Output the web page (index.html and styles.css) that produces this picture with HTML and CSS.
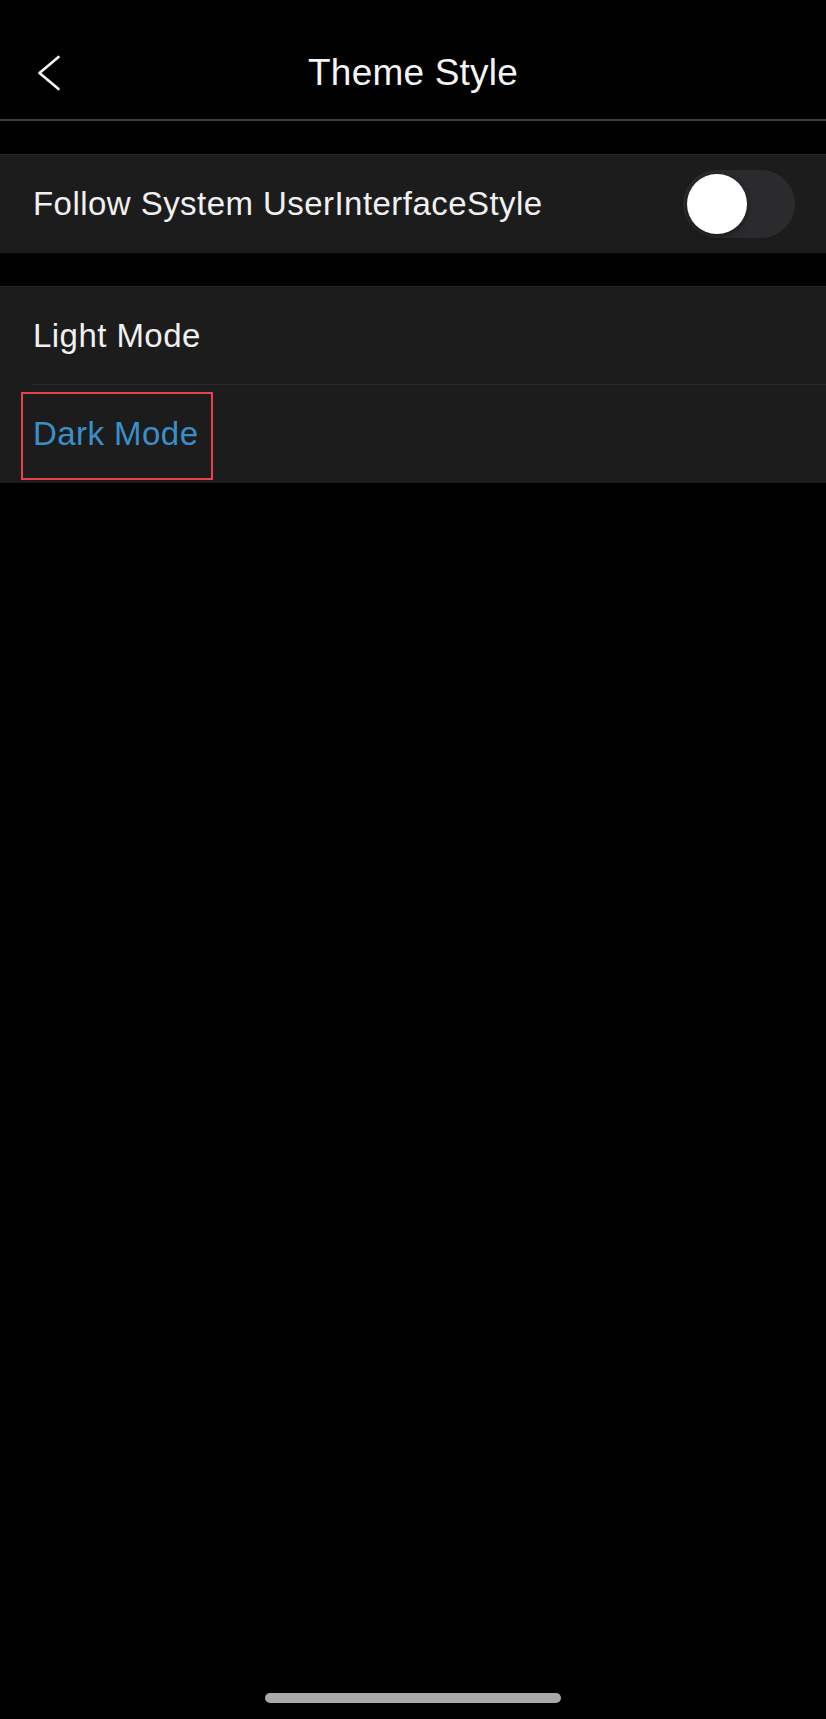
FILE: index.html
```html
<!DOCTYPE html>
<html lang="en">
<head>
<meta charset="utf-8">
<title>Theme Style</title>
<link rel="stylesheet" href="styles.css">
</head>
<body>
<div class="screen">
  <header class="navbar">
    <div class="nav-left">
      <svg class="back-icon" width="30" height="42" viewBox="0 0 30 42" aria-hidden="true">
        <polyline points="24.5,5 5.5,21 24.5,37" fill="none" stroke="#f2f2f2" stroke-width="2.7" stroke-linecap="round" stroke-linejoin="round"/>
      </svg>
    </div>
    <h1 class="nav-title">Theme Style</h1>
    <div class="nav-right"></div>
  </header>

  <section class="group group-first">
    <div class="row">
      <span class="row-label">Follow System UserInterfaceStyle</span>
      <span class="switch"><span class="switch-knob"></span></span>
    </div>
  </section>

  <section class="group">
    <div class="row row-sep">
      <span class="row-label">Light Mode</span>
    </div>
    <div class="row row-selected">
      <span class="row-label label-active">Dark Mode</span>
      <span class="highlight-box"></span>
    </div>
  </section>

  <div class="home-indicator"></div>
</div>
</body>
</html>
```

FILE: styles.css
```css
html, body {
  margin: 0;
  padding: 0;
  background: #000;
}

body {
  font-family: "Liberation Sans", Arial, sans-serif;
  color: #f2f2f2;
}

.screen {
  display: flex;
  flex-direction: column;
  min-height: 1719px;
  background: #000;
}

.navbar {
  display: grid;
  grid-template-columns: 1fr auto 1fr;
  align-items: center;
  height: 93px;
  padding-top: 26px;
  border-bottom: 2px solid #3a3a3c;
}

.nav-left {
  display: flex;
  align-items: center;
  padding-left: 34px;
}

.back-icon {
  display: block;
}

.nav-title {
  margin: 0;
  font-size: 37px;
  font-weight: normal;
  color: #f4f4f4;
  letter-spacing: 0.2px;
}

.group {
  margin-top: 33px;
  background: #1c1c1c;
  border-top: 1px solid #262628;
}

.row {
  position: relative;
  display: flex;
  align-items: center;
  justify-content: space-between;
  height: 98px;
  padding: 0 31px 0 33px;
}

.row-sep::after {
  content: "";
  position: absolute;
  left: 32px;
  right: 0;
  bottom: 0;
  height: 1px;
  background: #2a2a2c;
}

.row-label {
  font-size: 33px;
  color: #f0f0f0;
  letter-spacing: 0.45px;
}

.label-active {
  color: #3b8fc8;
}

.switch {
  position: relative;
  display: flex;
  align-items: center;
  width: 112px;
  height: 68px;
  border-radius: 34px;
  background: #2b2b2d;
}

.switch-knob {
  width: 60px;
  height: 60px;
  margin-left: 4px;
  border-radius: 50%;
  background: #ffffff;
  box-shadow: 0 2px 6px rgba(0, 0, 0, 0.45);
}

.highlight-box {
  position: absolute;
  left: 21px;
  top: 7px;
  width: 188px;
  height: 84px;
  border: 2.5px solid #e8434a;
}

.home-indicator {
  margin: auto auto 16px;
  width: 296px;
  height: 10px;
  border-radius: 5px;
  background: #a9a9a9;
}
```
